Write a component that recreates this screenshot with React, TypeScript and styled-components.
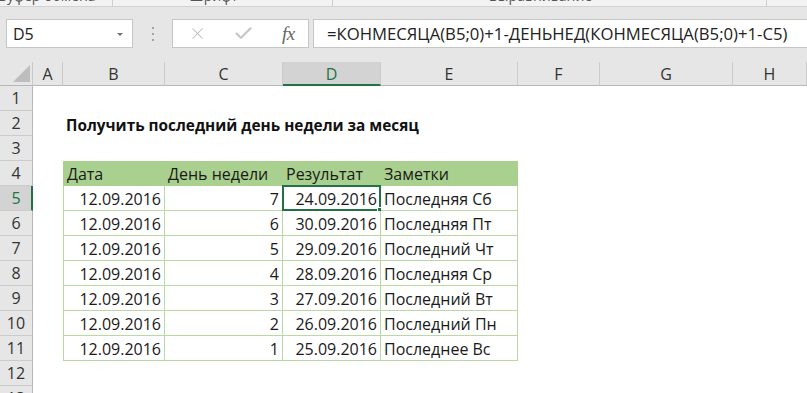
import styled, { createGlobalStyle, css } from 'styled-components'
import { X, Check } from 'lucide-react'

const GlobalStyle = createGlobalStyle`
  html, body {
    margin: 0;
    padding: 0;
    background: #ffffff;
    overflow: hidden;
  }
  body {
    font-family: 'Open Sans', 'Liberation Sans', sans-serif;
    color: #1f1f1f;
  }
`

type Column = { key: string; width: string }

const columns: Column[] = [
  { key: 'A', width: '30px' },
  { key: 'B', width: '102px' },
  { key: 'C', width: '118px' },
  { key: 'D', width: '98px' },
  { key: 'E', width: '137px' },
  { key: 'F', width: '82px' },
  { key: 'G', width: '133px' },
  { key: 'H', width: '1fr' },
]

const ribbonGroups = [
  { label: 'Буфер обмена', width: 113 },
  { label: 'Шрифт', width: 220 },
  { label: 'Выравнивание', width: 434 },
  { label: '', width: 60 },
]

const headers = ['Дата', 'День недели', 'Результат', 'Заметки']

const rows: [string, number, string, string][] = [
  ['12.09.2016', 7, '24.09.2016', 'Последняя Сб'],
  ['12.09.2016', 6, '30.09.2016', 'Последняя Пт'],
  ['12.09.2016', 5, '29.09.2016', 'Последний Чт'],
  ['12.09.2016', 4, '28.09.2016', 'Последняя Ср'],
  ['12.09.2016', 3, '27.09.2016', 'Последний Вт'],
  ['12.09.2016', 2, '26.09.2016', 'Последний Пн'],
  ['12.09.2016', 1, '25.09.2016', 'Последнее Вс'],
]

const ACTIVE_COL = 'D'
const ACTIVE_ROW = 5
const ROW_COUNT = 13

function renderCell(row: number, colIndex: number) {
  const col = columns[colIndex].key
  const inTable = colIndex >= 1 && colIndex <= 4 && row >= 4 && row <= 11

  if (row === 2 && col === 'B') {
    return <Title key={col}>Получить последний день недели за месяц</Title>
  }

  if (inTable && row === 4) {
    return (
      <TableCell key={col} $head $first={colIndex === 1} $align="left">
        {headers[colIndex - 1]}
      </TableCell>
    )
  }

  if (inTable) {
    const record = rows[row - 5]
    const value = record[colIndex - 1]
    const active = col === ACTIVE_COL && row === ACTIVE_ROW
    return (
      <TableCell
        key={col}
        $first={colIndex === 1}
        $align={colIndex === 4 ? 'left' : 'right'}
      >
        {value}
        {active && (
          <Selection>
            <FillHandle />
          </Selection>
        )}
      </TableCell>
    )
  }

  return <EmptyCell key={col} />
}

export default function App() {
  return (
    <>
      <GlobalStyle />
      <RibbonStrip>
        {ribbonGroups.map((g) => (
          <RibbonGroup key={g.width} style={{ width: g.width }}>
            <RibbonLabel>{g.label}</RibbonLabel>
          </RibbonGroup>
        ))}
      </RibbonStrip>

      <FormulaBar>
        <NameBox>
          D5
          <DropArrow />
        </NameBox>
        <Grip>
          <span />
          <span />
          <span />
        </Grip>
        <FuncButtons>
          <X size={19} strokeWidth={1.3} color="#b9b9b9" />
          <Check size={21} strokeWidth={2.4} color="#c4c4c4" />
          <FxLabel>fx</FxLabel>
        </FuncButtons>
        <FormulaInput>=КОНМЕСЯЦА(B5;0)+1-ДЕНЬНЕД(КОНМЕСЯЦА(B5;0)+1-C5)</FormulaInput>
      </FormulaBar>

      <Sheet $template={columns.map((c) => c.width).join(' ')}>
        <Corner>
          <CornerTriangle />
        </Corner>
        {columns.map((c) => (
          <ColumnHeader key={c.key} $active={c.key === ACTIVE_COL}>
            {c.key}
          </ColumnHeader>
        ))}

        {Array.from({ length: ROW_COUNT }, (_, i) => i + 1).map((row) => (
          <RowGroup key={row}>
            <RowHeader $active={row === ACTIVE_ROW}>{row}</RowHeader>
            {columns.map((_, ci) => renderCell(row, ci))}
          </RowGroup>
        ))}
      </Sheet>
    </>
  )
}

const RibbonStrip = styled.div`
  display: flex;
  height: 6px;
  overflow: hidden;
  background: #f3f3f3;
  border-bottom: 1px solid #d2d2d2;
`

const RibbonGroup = styled.div`
  flex: none;
  display: flex;
  justify-content: center;
  padding-right: 18px;
  box-sizing: border-box;
  border-right: 1px solid #cfcfcf;
`

const RibbonLabel = styled.div`
  margin-top: -13px;
  font-size: 14px;
  line-height: 18px;
  color: #555;
  white-space: nowrap;
`

const FormulaBar = styled.div`
  display: flex;
  align-items: flex-start;
  height: 55px;
  box-sizing: border-box;
  padding: 12px 0 0 6px;
  background: #e6e6e6;
  overflow: hidden;
`

const boxBase = css`
  height: 29px;
  box-sizing: border-box;
  background: #ffffff;
  border: 1px solid #c6c6c6;
`

const NameBox = styled.div`
  ${boxBase};
  position: relative;
  width: 127px;
  display: flex;
  align-items: center;
  padding-left: 6px;
  font-size: 16px;
  color: #222;
`

const DropArrow = styled.span`
  position: absolute;
  right: 9px;
  top: 13px;
  border-left: 3.5px solid transparent;
  border-right: 3.5px solid transparent;
  border-top: 3.5px solid #6f6f6f;
`

const Grip = styled.div`
  width: 39px;
  height: 29px;
  display: flex;
  flex-direction: column;
  align-items: center;
  justify-content: center;
  gap: 4px;

  span {
    width: 2px;
    height: 2px;
    background: #a3a3a3;
  }
`

const FuncButtons = styled.div`
  ${boxBase};
  width: 137px;
  display: flex;
  align-items: center;
  padding-left: 15px;
  gap: 24px;

  svg:nth-child(2) {
    margin-left: 2px;
  }
`

const FxLabel = styled.span`
  margin-left: 4px;
  font-family: 'Liberation Serif', 'DejaVu Serif', serif;
  font-style: italic;
  font-size: 19px;
  color: #666;
  letter-spacing: -0.5px;
`

const FormulaInput = styled.div`
  ${boxBase};
  flex: 1;
  margin-left: 4px;
  margin-right: -10px;
  display: flex;
  align-items: center;
  padding-left: 13px;
  font-size: 16.7px;
  color: #222;
  white-space: nowrap;
`

const Sheet = styled.div<{ $template: string }>`
  display: grid;
  grid-template-columns: 33px ${({ $template }) => $template};
  grid-template-rows: 24px repeat(${ROW_COUNT}, 25px);
  font-size: 16px;
`

const RowGroup = styled.div`
  display: contents;
`

const headerBase = css`
  display: flex;
  align-items: center;
  justify-content: center;
  box-sizing: border-box;
  background: #e6e6e6;
  color: #333;
  font-size: 16px;
`

const Corner = styled.div`
  ${headerBase};
  position: relative;
  border-right: 1px solid #c9c9c9;
  border-bottom: 1px solid #b7b7b7;
`

const CornerTriangle = styled.span`
  position: absolute;
  right: 2px;
  bottom: 3px;
  width: 0;
  height: 0;
  border-left: 17px solid transparent;
  border-bottom: 17px solid #bdbdbd;
`

const ColumnHeader = styled.div<{ $active: boolean }>`
  ${headerBase};
  border-right: 1px solid #cbcbcb;
  border-bottom: 1px solid #b7b7b7;
  padding-top: 1px;

  ${({ $active }) =>
    $active &&
    css`
      background: #d3d3d3;
      color: #217346;
      border-bottom: 2px solid #217346;
      padding-top: 2px;
    `}
`

const RowHeader = styled.div<{ $active: boolean }>`
  ${headerBase};
  border-right: 1px solid #b7b7b7;
  border-bottom: 1px solid #cbcbcb;

  ${({ $active }) =>
    $active &&
    css`
      background: #d3d3d3;
      color: #217346;
      border-right: 2px solid #217346;
      padding-left: 1px;
    `}
`

const EmptyCell = styled.div`
  background: transparent;
`

const Title = styled.div`
  position: relative;
  z-index: 1;
  display: flex;
  align-items: center;
  padding: 2px 0 0 3px;
  font-weight: 700;
  font-size: 15.35px;
  white-space: nowrap;
  overflow: visible;
  color: #111;
`

const TableCell = styled.div<{
  $head?: boolean
  $first?: boolean
  $align: 'left' | 'right'
}>`
  position: relative;
  display: flex;
  align-items: center;
  justify-content: ${({ $align }) => ($align === 'left' ? 'flex-start' : 'flex-end')};
  box-sizing: border-box;
  padding: 2px 3px 0 3px;
  white-space: nowrap;
  color: #1a1a1a;
  background: #ffffff;
  border-right: 1px solid #b9d9a3;
  border-bottom: 1px solid #b9d9a3;
  ${({ $first }) => $first && 'border-left: 1px solid #b9d9a3;'}

  ${({ $head }) =>
    $head &&
    css`
      background: #a9d08e;
      border-color: #a9d08e;
    `}
`

const Selection = styled.div`
  position: absolute;
  left: -1px;
  top: -1px;
  right: -1px;
  bottom: -1px;
  border: 2px solid #217346;
  pointer-events: none;
`

const FillHandle = styled.span`
  position: absolute;
  right: -5px;
  bottom: -5px;
  width: 5px;
  height: 5px;
  background: #217346;
  border: 1px solid #ffffff;
`
